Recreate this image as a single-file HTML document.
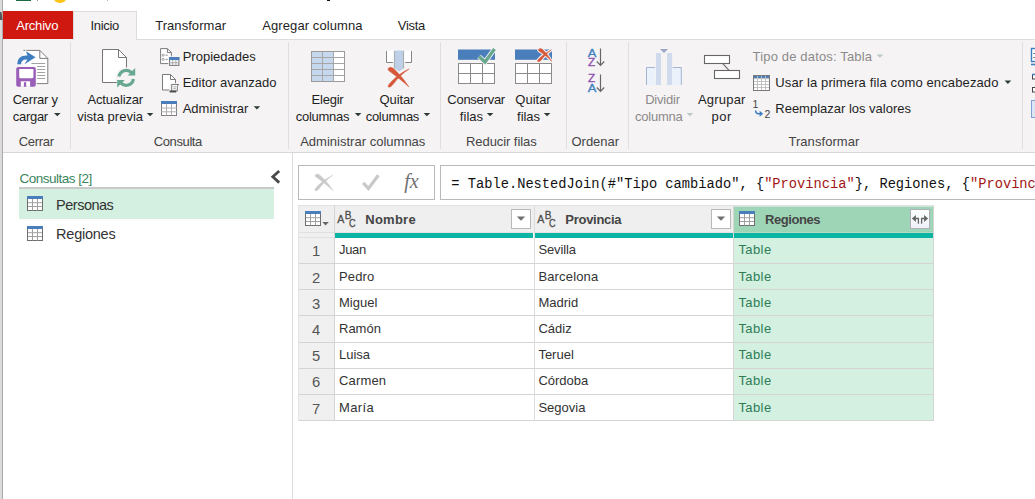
<!DOCTYPE html>
<html lang="es"><head><meta charset="utf-8"><title>Editor de Power Query</title>
<style>
html,body{margin:0;padding:0;}
body{width:1035px;height:499px;overflow:hidden;background:#fff;position:relative;font-family:"Liberation Sans",sans-serif;}
.a{position:absolute;}
.t{position:absolute;white-space:nowrap;font-size:13px;line-height:16px;color:#1f1f1f;}
.sep{position:absolute;width:1px;background:#e0dedf;top:42px;height:107px;}
.hl{position:absolute;height:1px;background:#d4d4d4;left:298px;width:636px;}
.vl{position:absolute;width:1px;background:#d4d4d4;top:206px;height:215px;}
</style></head><body>
<!-- left edge strip -->
<div class="a" style="left:0;top:0;width:2px;height:499px;background:#dbdbdb"></div>
<div class="a" style="left:2px;top:0;width:1px;height:499px;background:#ababab"></div>

<!-- ribbon background -->
<div class="a" style="left:3px;top:39px;width:1032px;height:113px;background:#f5f3f4"></div>
<div class="a" style="left:3px;top:152px;width:1032px;height:1px;background:#d9d7d8"></div>
<div class="a" style="left:136px;top:39px;width:899px;height:1px;background:#dddbdc"></div>
<!-- tabs -->
<div class="a" style="left:3px;top:11px;width:70px;height:28px;background:#cf1910"></div>
<div class="a" style="left:73px;top:11px;width:64px;height:29px;background:#f5f3f4;border:1px solid #dddbdc;border-bottom:none;box-sizing:border-box"></div>

<!-- group separators -->
<div class="sep" style="left:70px"></div>
<div class="sep" style="left:288px"></div>
<div class="sep" style="left:440px"></div>
<div class="sep" style="left:566px"></div>
<div class="sep" style="left:628px"></div>
<div class="sep" style="left:1022px"></div>

<!-- queries pane -->
<div class="a" style="left:292px;top:153px;width:1px;height:346px;background:#dcdcdc"></div>
<div class="a" style="left:19px;top:187px;width:255px;height:2px;background:#c9c9c9"></div>
<div class="a" style="left:19px;top:189px;width:255px;height:30px;background:#d3f0e0"></div>

<!-- formula bar -->
<div class="a" style="left:298px;top:165px;width:137px;height:35px;border:1px solid #b9b9b9;box-sizing:border-box;background:#fff"></div>
<div class="a" style="left:440px;top:165px;width:600px;height:35px;border:1px solid #b9b9b9;box-sizing:border-box;background:#fff"></div>
<div class="t" style="left:451.3px;top:176.9px;font-family:'Liberation Mono',monospace;font-size:13.73px;color:#111">= Table.NestedJoin(#"Tipo cambiado", {<span style="color:#a31515">"Provincia"</span>}, Regiones, {<span style="color:#a31515">"Provincia"</span>}</div>

<!-- table -->
<div class="a" style="left:298px;top:206px;width:636px;height:27px;background:#efefef"></div>
<div class="a" style="left:298px;top:233px;width:36px;height:188px;background:#f0f0f0"></div>
<div class="a" style="left:734px;top:206px;width:199px;height:1px;background:#cfe3d8"></div>
<div class="a" style="left:734px;top:207px;width:199px;height:26px;background:#9fd5b7"></div>
<div class="a" style="left:734px;top:238px;width:199px;height:182px;background:#d3f0e0"></div>
<div class="a" style="left:335px;top:233px;width:198px;height:5px;background:#0bb5a3"></div>
<div class="a" style="left:535px;top:233px;width:198px;height:5px;background:#0bb5a3"></div>
<div class="a" style="left:734px;top:233px;width:199px;height:5px;background:#0bb5a3"></div>
<div class="hl" style="top:205px;background:#e2e2e2"></div>
<div class="hl" style="top:263px"></div>
<div class="hl" style="top:289px"></div>
<div class="hl" style="top:315px"></div>
<div class="hl" style="top:342px"></div>
<div class="hl" style="top:368px"></div>
<div class="hl" style="top:394px"></div>
<div class="hl" style="top:420px"></div>
<div class="vl" style="left:298px;background:#e4e4e4"></div>
<div class="vl" style="left:334px"></div>
<div class="vl" style="left:534px;background:#dcdcdc"></div>
<div class="vl" style="left:733px;background:#d6d6d6"></div>
<div class="vl" style="left:933px"></div>
<div class="a" style="left:298px;top:232px;width:36px;height:1px;background:#e0e0e0"></div>
<div class="a" style="left:298px;top:237px;width:36px;height:1px;background:#e0e0e0"></div>
<div class="a" style="left:335px;top:232px;width:398px;height:1px;background:#e6e2e3"></div>
<div class="a" style="left:734px;top:232px;width:199px;height:1px;background:#b4dac6"></div>

<div class="t" style="left:16.2px;top:17.5px;color:#fff;letter-spacing:-0.19px;">Archivo</div>
<div class="t" style="left:90.4px;top:17.5px;letter-spacing:-0.29px;">Inicio</div>
<div class="t" style="left:155.2px;top:17.5px;letter-spacing:0.05px;">Transformar</div>
<div class="t" style="left:262.2px;top:17.5px;letter-spacing:0.10px;">Agregar columna</div>
<div class="t" style="left:397.8px;top:17.5px;letter-spacing:-0.32px;">Vista</div>
<div class="t" style="left:18.8px;top:133.5px;color:#444;letter-spacing:-0.33px;">Cerrar</div>
<div class="t" style="left:153.8px;top:133.5px;color:#444;letter-spacing:-0.40px;">Consulta</div>
<div class="t" style="left:300.2px;top:133.5px;color:#444;letter-spacing:0.01px;">Administrar columnas</div>
<div class="t" style="left:466.0px;top:133.5px;color:#444;letter-spacing:-0.07px;">Reducir filas</div>
<div class="t" style="left:571.5px;top:133.5px;color:#444;letter-spacing:-0.02px;">Ordenar</div>
<div class="t" style="left:788.4px;top:133.5px;color:#444;letter-spacing:0.07px;">Transformar</div>
<div class="t" style="left:12.7px;top:91.9px;letter-spacing:-0.24px;">Cerrar y</div>
<div class="t" style="left:12.7px;top:108.7px;letter-spacing:-0.27px;">cargar</div>
<div class="t" style="left:87.5px;top:91.9px;letter-spacing:-0.16px;">Actualizar</div>
<div class="t" style="left:77.2px;top:108.7px;letter-spacing:0.01px;">vista previa</div>
<div class="t" style="left:182.7px;top:49.1px;letter-spacing:0.00px;">Propiedades</div>
<div class="t" style="left:182.7px;top:75.0px;letter-spacing:-0.02px;">Editor avanzado</div>
<div class="t" style="left:182.7px;top:100.8px;letter-spacing:-0.01px;">Administrar</div>
<div class="t" style="left:311.6px;top:91.9px;letter-spacing:-0.23px;">Elegir</div>
<div class="t" style="left:295.8px;top:108.7px;letter-spacing:-0.28px;">columnas</div>
<div class="t" style="left:379.6px;top:91.9px;letter-spacing:-0.12px;">Quitar</div>
<div class="t" style="left:365.7px;top:108.7px;letter-spacing:-0.28px;">columnas</div>
<div class="t" style="left:447.3px;top:91.9px;letter-spacing:-0.26px;">Conservar</div>
<div class="t" style="left:459.8px;top:108.7px;letter-spacing:0.04px;">filas</div>
<div class="t" style="left:515.3px;top:91.9px;letter-spacing:-0.00px;">Quitar</div>
<div class="t" style="left:517.1px;top:108.7px;letter-spacing:-0.06px;">filas</div>
<div class="t" style="left:645.2px;top:91.9px;color:#8c8a8b;letter-spacing:-0.22px;">Dividir</div>
<div class="t" style="left:635.0px;top:108.7px;color:#8c8a8b;letter-spacing:-0.24px;">columna</div>
<div class="t" style="left:698.0px;top:91.9px;letter-spacing:0.19px;">Agrupar</div>
<div class="t" style="left:711.5px;top:108.7px;letter-spacing:0.55px;">por</div>
<div class="t" style="left:752.6px;top:49.1px;color:#8c8a8b;letter-spacing:0.16px;">Tipo de datos: Tabla</div>
<div class="t" style="left:775.3px;top:75.0px;letter-spacing:0.12px;">Usar la primera fila como encabezado</div>
<div class="t" style="left:775.3px;top:100.8px;letter-spacing:-0.01px;">Reemplazar los valores</div>
<div class="t" style="left:19.5px;top:171.0px;font-size:13.5px;color:#3a8560;letter-spacing:-0.51px;">Consultas [2]</div>
<div class="t" style="left:56.1px;top:196.6px;font-size:14.5px;color:#333;letter-spacing:-0.50px;">Personas</div>
<div class="t" style="left:56.1px;top:225.8px;font-size:14.5px;color:#333;letter-spacing:-0.24px;">Regiones</div>
<div class="t" style="left:365.3px;top:211.5px;font-weight:700;color:#454545;letter-spacing:0.24px;">Nombre</div>
<div class="t" style="left:565.3px;top:211.5px;font-weight:700;color:#454545;letter-spacing:-0.28px;">Provincia</div>
<div class="t" style="left:765.1px;top:211.5px;font-weight:700;color:#454545;letter-spacing:-0.46px;">Regiones</div>
<div class="t" style="top:243.4px;font-size:14.8px;color:#555;left:298px;width:36px;text-align:center;">1</div>
<div class="t" style="left:339.0px;top:242.3px;color:#333;letter-spacing:-0.33px;">Juan</div>
<div class="t" style="left:538.4px;top:242.3px;color:#333;letter-spacing:-0.10px;">Sevilla</div>
<div class="t" style="left:738.4px;top:242.3px;color:#2f7d55;letter-spacing:0.41px;">Table</div>
<div class="t" style="top:269.6px;font-size:14.8px;color:#555;left:298px;width:36px;text-align:center;">2</div>
<div class="t" style="left:339.0px;top:268.5px;color:#333;letter-spacing:0.12px;">Pedro</div>
<div class="t" style="left:538.4px;top:268.5px;color:#333;letter-spacing:0.16px;">Barcelona</div>
<div class="t" style="left:738.4px;top:268.5px;color:#2f7d55;letter-spacing:0.41px;">Table</div>
<div class="t" style="top:295.8px;font-size:14.8px;color:#555;left:298px;width:36px;text-align:center;">3</div>
<div class="t" style="left:339.0px;top:294.7px;color:#333;">Miguel</div>
<div class="t" style="left:538.4px;top:294.7px;color:#333;">Madrid</div>
<div class="t" style="left:738.4px;top:294.7px;color:#2f7d55;letter-spacing:0.41px;">Table</div>
<div class="t" style="top:322.0px;font-size:14.8px;color:#555;left:298px;width:36px;text-align:center;">4</div>
<div class="t" style="left:339.0px;top:320.9px;color:#333;">Ramón</div>
<div class="t" style="left:538.4px;top:320.9px;color:#333;">Cádiz</div>
<div class="t" style="left:738.4px;top:320.9px;color:#2f7d55;letter-spacing:0.41px;">Table</div>
<div class="t" style="top:348.2px;font-size:14.8px;color:#555;left:298px;width:36px;text-align:center;">5</div>
<div class="t" style="left:339.0px;top:347.1px;color:#333;">Luisa</div>
<div class="t" style="left:538.4px;top:347.1px;color:#333;">Teruel</div>
<div class="t" style="left:738.4px;top:347.1px;color:#2f7d55;letter-spacing:0.41px;">Table</div>
<div class="t" style="top:374.4px;font-size:14.8px;color:#555;left:298px;width:36px;text-align:center;">6</div>
<div class="t" style="left:339.0px;top:373.3px;color:#333;letter-spacing:0.15px;">Carmen</div>
<div class="t" style="left:538.4px;top:373.3px;color:#333;">Córdoba</div>
<div class="t" style="left:738.4px;top:373.3px;color:#2f7d55;letter-spacing:0.41px;">Table</div>
<div class="t" style="top:400.6px;font-size:14.8px;color:#555;left:298px;width:36px;text-align:center;">7</div>
<div class="t" style="left:339.0px;top:399.5px;color:#333;letter-spacing:0.37px;">María</div>
<div class="t" style="left:538.4px;top:399.5px;color:#333;">Segovia</div>
<div class="t" style="left:738.4px;top:399.5px;color:#2f7d55;letter-spacing:0.41px;">Table</div>
<svg class="a" style="left:0;top:0" width="1035" height="499" viewBox="0 0 1035 499">
<defs>
<path id="dd" d="M0 0h6.6l-3.3 3.3z"/>
</defs>
<!-- dropdown arrows (ribbon) -->
<g fill="#2e3a36">
<use href="#dd" x="54" y="113"/><use href="#dd" x="146.8" y="113"/><use href="#dd" x="253.6" y="106.2"/>
<use href="#dd" x="354.8" y="113"/><use href="#dd" x="423.6" y="113"/><use href="#dd" x="486.8" y="113"/><use href="#dd" x="543.8" y="113"/>
<use href="#dd" x="1004.6" y="80.6"/>
</g>
<g fill="#b9c9c2"><use href="#dd" x="686.6" y="113"/><use href="#dd" x="876.6" y="54.4"/></g>

<!-- Cerrar y cargar -->
<g>
<path d="M23.400 50.400h16.400l8 8v25.200h-24.400z" fill="#fff"/>
<path d="M23.400 50.400h16.400l8 8v25.200h-11.600" fill="none" stroke="#7d7d7d" stroke-width="1"/>
<path d="M39.800 50.400v8h8" fill="none" stroke="#7d7d7d" stroke-width="1"/>
<path d="M31.400 63.500h13.800M37.200 66.500h8M37.200 69.500h8M37.200 72.500h8M37.200 75.500h8M37.200 78.500h8" stroke="#a2a2a2" stroke-width="1"/>
<rect x="15.400" y="66.200" width="21.200" height="21.400" rx="2.600" fill="#f7f4f7"/>
<rect x="16.200" y="67" width="19.600" height="19.800" rx="2" fill="#9a5eb8"/>
<path d="M19.200 69.100h14.200v7.600q0 1.500-1.500 1.500h-11.200q-1.500 0-1.500-1.500z" fill="#fff"/>
<rect x="20.800" y="81.300" width="9.300" height="5.500" fill="#fff"/>
<rect x="23.900" y="82.200" width="2.300" height="4.600" fill="#9a5eb8"/>
<g fill="#fbfafb" stroke="#fbfafb" stroke-width="2" stroke-linejoin="round">
<path d="M19.100 64.300C19.100 59.300 22 57.500 26.500 57.500H30" fill="none" stroke-width="5.600"/>
<path d="M26 51.300L35.500 57.300L24.500 64.300L27.400 59.600V55.400Z"/>
</g>
<path d="M19.100 64.300C19.100 59.300 22 57.500 26.500 57.500H30" fill="none" stroke="#3f7fc1" stroke-width="3.900"/>
<path d="M26 51.300L35.500 57.300L24.500 64.300L27.400 59.600V55.400Z" fill="#3f7fc1"/>
</g>

<!-- Actualizar vista previa -->
<g>
<path d="M102.5 49.5h16l8 8v25h-24z" fill="#fff" stroke="#777" stroke-width="1"/>
<path d="M118.5 49.5v8h8" fill="none" stroke="#777" stroke-width="1"/>
<circle cx="126.2" cy="77.8" r="10.6" fill="#f5f3f4"/>
<path d="M119 76.600a7.300 7.300 0 0 1 12.600-3.900" fill="none" stroke="#68a890" stroke-width="3.200"/>
<path d="M133.400 79a7.300 7.300 0 0 1-12.600 3.900" fill="none" stroke="#68a890" stroke-width="3.200"/>
<path d="M127.600 75.600h7.600v-7.600z" fill="#68a890"/>
<path d="M124.800 80h-7.600v7.600z" fill="#68a890"/>
</g>

<!-- Propiedades -->
<g>
<path d="M160.6 48.6h6.800l4 4v11h-10.800z" fill="#fff" stroke="#7a7a7a"/>
<path d="M167.400 48.600v4h4" fill="none" stroke="#7a7a7a"/>
<circle cx="163.200" cy="55.200" r="1" fill="none" stroke="#888" stroke-width=".8"/>
<circle cx="163.200" cy="59.400" r="1" fill="none" stroke="#888" stroke-width=".8"/>
<path d="M165.400 55.200h2.400M165.400 59.400h2.400" stroke="#999"/>
<rect x="168.300" y="56.300" width="11.400" height="10.200" fill="#f5f3f4"/>
<rect x="169.600" y="57.600" width="9.300" height="7.800" fill="#fff" stroke="#777"/>
<rect x="169.100" y="57.100" width="10.300" height="3" fill="#4a7ebb"/>
<path d="M172.700 60.100v5.300M175.900 60.100v5.300M169.600 62.800h9.300" stroke="#a0a0a0" stroke-width=".9"/>
</g>

<!-- Editor avanzado -->
<g>
<path d="M162.500 74.500h8l5 5v10.500h-13z" fill="#fff" stroke="#7a7a7a"/>
<path d="M170.500 74.500v5h5" fill="none" stroke="#7a7a7a"/>
<rect x="169.400" y="83.200" width="9.800" height="9.600" fill="#f5f3f4"/>
<path d="M171.700 91v-6.500h7l-1.400 1.600v4.900z" fill="#fff" stroke="#6a6a6a" stroke-width=".9"/>
<path d="M173.300 86.800h2.600M173.300 88.700h2.600" stroke="#8a8a8a" stroke-width=".8"/>
<path d="M169.600 91.500h6.600" stroke="#4a4a4a" stroke-width="1.900"/>
</g>

<!-- Administrar -->
<g>
<rect x="161.5" y="101.5" width="15" height="14" fill="#fff" stroke="#808080"/>
<rect x="161" y="101" width="16" height="3" fill="#4a7ebb"/>
<path d="M166.5 104v11.5M171.5 104v11.5M161.5 108h15M161.5 111.8h15" stroke="#b0b0b0" stroke-width="1"/>
</g>

<!-- Elegir columnas -->
<g>
<rect x="311.5" y="51.5" width="33" height="30" fill="#fff" stroke="#9a9a9a"/>
<rect x="312" y="52" width="21.5" height="29" fill="#c5d8ed"/>
<path d="M322.5 51.5v30M333.5 51.5v30M311.5 57.5h33M311.5 63.5h33M311.5 69.5h33M311.5 75.5h33" stroke="#a6a6a6" stroke-width="1"/>
</g>

<!-- Quitar columnas -->
<g>
<rect x="386.500" y="50.600" width="25" height="12" fill="#fff"/>
<path d="M386.500 51v11.500h6.400M405.100 62.500h6.400v-11.500" fill="none" stroke="#858585"/>
<path d="M394.400 50.600h9.200v18l-4.600 3-4.600-3z" fill="#bdd0e8"/>
<path d="M394.400 51v17.500M403.600 51v17.500" fill="none" stroke="#a3a3a3" stroke-width=".9"/>
<g fill="#d6583a" stroke="#d6583a" stroke-width=".5" stroke-linejoin="round">
<path d="M388.200 68.500C389.800 66.400 392.200 67.300 394.300 69.300C399.500 74 405 81 408.900 86.900C403 81.600 396 75.800 390.500 72C388.800 70.800 387.500 69.700 388.200 68.500Z"/>
<path d="M409.100 68.900C402 72 394 78 389.300 84C388.200 85.500 387.500 86.700 388.700 87.100C390.500 87.500 392.200 85.700 393.700 83.600C397.700 78 403 73 409.100 68.900Z"/>
</g>
</g>

<!-- Conservar filas -->
<g>
<rect x="458.500" y="63.500" width="36" height="20" fill="#fff" stroke="#8a8a8a"/>
<path d="M470.500 63.500v20M482.500 63.500v20M458.500 73.500h36" stroke="#8a8a8a"/>
<rect x="458" y="49.500" width="37" height="10.300" fill="#4a7ebb"/>
<path d="M479 56.500l6 5.500 9.500-13" fill="none" stroke="#f5f3f4" stroke-width="5"/>
<path d="M479 56.500l6 5.500 9.500-13" fill="none" stroke="#68a68e" stroke-width="3.300"/>
</g>
<!-- Quitar filas -->
<g>
<rect x="515.500" y="63.500" width="36" height="20" fill="#fff" stroke="#8a8a8a"/>
<path d="M527.500 63.500v20M539.500 63.500v20M515.500 73.500h36" stroke="#8a8a8a"/>
<rect x="515" y="49.500" width="37" height="10.300" fill="#4a7ebb"/>
<g fill="#f5f3f4" stroke="#f5f3f4" stroke-width="2.400" stroke-linejoin="round"><use href="#xq1"/><use href="#xq2"/></g>
<g id="xq" fill="#d6583a" stroke="#d6583a" stroke-width=".5" stroke-linejoin="round"><path id="xq1" d="M538.500 49.500C540 47.800 542 48.800 543.600 50.400C547 54 550 58 551.900 61.500C548.500 58 544.500 54.600 540.500 52.100C539 51.100 537.900 50.500 538.500 49.500Z"/>
<path id="xq2" d="M551.400 49.900C546.500 52 541.500 56 538.200 59.600C537.300 60.600 537.200 61.500 538.300 61.700C539.800 61.900 541.100 60.500 542.100 59.100C544.600 55.600 547.600 52.600 551.400 49.900Z"/></g>
</g>

<!-- Sort -->
<g font-family="Liberation Sans,sans-serif" font-size="11.600" stroke-width=".3" lengthAdjust="spacingAndGlyphs">
<text x="587.700" y="56.600" fill="#3f7fc1" stroke="#3f7fc1" textLength="8.600" lengthAdjust="spacingAndGlyphs">A</text>
<text x="588.100" y="65.700" fill="#8e4fb0" stroke="#8e4fb0" font-size="10" textLength="7.200" lengthAdjust="spacingAndGlyphs">Z</text>
<text x="588.100" y="81.500" fill="#8e4fb0" stroke="#8e4fb0" font-size="10" textLength="7.200" lengthAdjust="spacingAndGlyphs">Z</text>
<text x="587.700" y="92" fill="#3f7fc1" stroke="#3f7fc1" textLength="8.600" lengthAdjust="spacingAndGlyphs">A</text>
</g>
<path d="M600.500 48.500v16.500M596.800 61.500l3.700 3.800 3.700-3.800M600.500 74.500v16.500M596.800 87.500l3.700 3.800 3.700-3.800" fill="none" stroke="#666" stroke-width="1.200"/>

<!-- Dividir columna (disabled) -->
<g>
<rect x="646" y="67" width="9.200" height="18" fill="#ecf2fc"/>
<rect x="672.600" y="67" width="9.200" height="18" fill="#ecf2fc"/>
<path d="M646.500 85v-17.500h8.700M672.600 67.500h8.700v17.500" fill="none" stroke="#a3b3d2" stroke-width="1"/>
<rect x="656" y="53" width="5" height="32" fill="#cfdaec"/>
<rect x="667.100" y="53" width="5" height="32" fill="#cfdaec"/>
<path d="M659.900 49h8.200l-4.100 3.900z" fill="#97a7c7"/>
</g>

<!-- Agrupar por -->
<g fill="#fff" stroke="#666" stroke-width="1.100">
<rect x="704.500" y="55.500" width="25" height="8"/>
<rect x="714.500" y="70.500" width="25" height="8"/>
<path d="M722.800 63.700l6.200 6.600" fill="none"/>
</g>

<!-- Usar primera fila icon -->
<g>
<rect x="753.500" y="75.500" width="16" height="15" fill="#fff" stroke="#7a7a7a"/>
<rect x="754" y="76" width="15" height="2.400" fill="#4a7ebb"/>
<path d="M757.500 76v14M761.500 76v14M765.500 76v14M754 81.500h15M754 84.500h15M754 87.500h15M754 78.700h15" stroke="#c2c2c2" stroke-width="1"/>
</g>
<!-- Reemplazar icon -->
<g font-family="Liberation Sans,sans-serif" fill="#444">
<text x="752.400" y="107.600" font-size="10.500">1</text>
<text x="764.400" y="117.600" font-size="10.500">2</text>
</g>
<path d="M755.600 110.500q0 3.300 3 3.300h2" fill="none" stroke="#3f7fc1" stroke-width="1.500"/>
<path d="M759.600 110.800l3.600 3-3.600 3z" fill="#3f7fc1"/>

<!-- right edge partial icons -->
<g>
<rect x="1031.500" y="48.500" width="6" height="13" fill="#fff" stroke="#3f7fc1" stroke-width="1.400"/>
<path d="M1031 64.500h5" stroke="#3f7fc1" stroke-width="1.600"/>
<path d="M1033 53.500h3M1033 57.500h3" stroke="#888"/>
<rect x="1032.500" y="74.500" width="5" height="4.500" fill="#fff" stroke="#444"/>
<path d="M1032 74.500h4" stroke="#3f7fc1" stroke-width="1.500"/>
<rect x="1032.500" y="87.500" width="5" height="4.500" fill="#fff" stroke="#444"/>
<rect x="1031.500" y="100.500" width="6" height="17" fill="#dbe6f6" stroke="#7fa0d0"/>
</g>

<!-- queries pane: chevron -->
<path d="M279.200 171l-6.400 5.800 6.400 5.800" fill="none" stroke="#4a4a4a" stroke-width="2.800"/>
<!-- query icons -->
<g id="qi">
<rect x="27.500" y="196.500" width="15" height="14" fill="#fff" stroke="#6e6e6e"/>
<rect x="27" y="196" width="16" height="3" fill="#4a7ebb"/>
<path d="M32.500 199v11.500M37.500 199v11.500M28 202.700h14M28 206.500h14" stroke="#a0a0a0" stroke-width="1"/>
</g>
<use href="#qi" y="30"/>
<use href="#qi" x="278" y="15"/>
<use href="#qi" x="712" y="15"/>

<!-- formula bar icons -->
<g fill="#c9c9c9" stroke="#c9c9c9" stroke-width=".4" stroke-linejoin="round">
<path d="M315.200 175.200C316.600 173.200 318.800 174 320.600 175.800C325 180 329.800 185.400 333.200 190.800C328 186 322 181 317.400 177.900C315.900 176.900 314.600 176.200 315.200 175.200Z"/>
<path d="M333.200 175C327 177.800 320 183 315.800 188C314.800 189.300 314.300 190.300 315.400 190.700C317 191.100 318.500 189.500 319.800 187.700C323.300 183 328 178.600 333.200 175Z"/>
</g>
<path d="M363.200 182.800l5.200 5.600 10-13.200" stroke="#c9c9c9" stroke-width="3.200" fill="none"/>
<text x="404.300" y="188.200" font-family="Liberation Serif,serif" font-style="italic" font-size="20" fill="#707070">fx</text>

<!-- table header icon -->
<g>
<path d="M322.400 222h6.400l-3.200 3.600z" fill="#666"/>
</g>
<!-- ABC icons -->
<g id="abc" font-family="Liberation Sans,sans-serif" fill="#4d4d4d" stroke="#4d4d4d" stroke-width=".3">
<text x="337.200" y="222.900" font-size="10.600">A</text>
<text x="344.800" y="218.800" font-size="10">B</text>
<text x="348.900" y="226.900" font-size="10.800" textLength="6.600" lengthAdjust="spacingAndGlyphs">C</text>
</g>
<use href="#abc" x="200"/>
<!-- dropdown buttons -->
<g>
<rect x="511.500" y="209.500" width="19" height="19" fill="#fff" stroke="#b9b9b9"/>
<path d="M516.800 216.600h8.400l-4.200 4.200z" fill="#707070"/>
<rect x="711.500" y="209.500" width="19" height="19" fill="#fff" stroke="#b9b9b9"/>
<path d="M716.800 216.600h8.400l-4.200 4.200z" fill="#707070"/>
</g>
<!-- expand button -->
<g>
<linearGradient id="eg" x1="0" y1="0" x2="0" y2="1"><stop offset="0" stop-color="#ffffff"/><stop offset="1" stop-color="#eef0f6"/></linearGradient>
<rect x="910.500" y="209.500" width="19" height="19" fill="url(#eg)" stroke="#aeaeb8"/>
<path d="M918.400 223.800v-5.300h-3.400M921.600 223.800v-5.300h3.400" fill="none" stroke="#666" stroke-width="1.300"/>
<path d="M915.900 214.900v7.200l-4-3.600zM924.100 214.900v7.200l4-3.600z" fill="#666"/>
</g>
<!-- top strip fragments -->
<rect x="16" y="0" width="15" height="1" fill="#1e6b41"/>
<rect x="37" y="0" width="1" height="1" fill="#9a9a9a"/>
<rect x="107" y="0" width="1" height="1" fill="#b5b5b5"/>
<circle cx="60" cy="-4.200" r="7.200" fill="#fbc417"/>
<rect x="327" y="0" width="3" height="1" fill="#111"/>
<path d="M0 12l1.500 0 1 8h-2.500z" fill="#555"/>
</svg>

</body></html>
